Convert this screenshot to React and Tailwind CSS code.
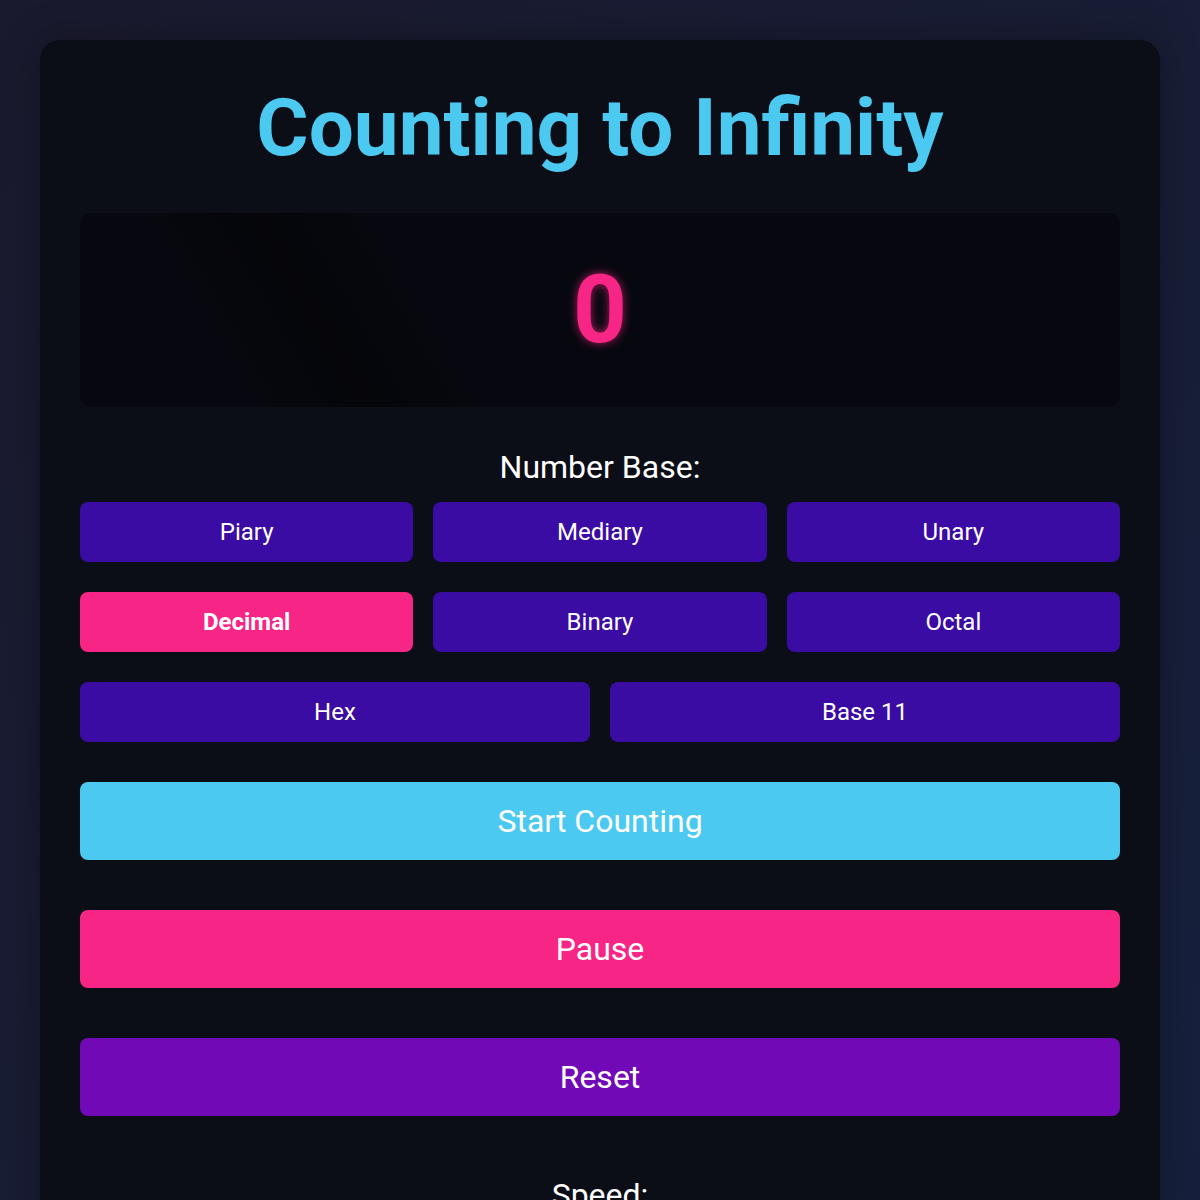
import { useState } from "react";

const bases = [
  ["Piary", "Mediary", "Unary"],
  ["Decimal", "Binary", "Octal"],
  ["Hex", "Base 11"],
];

const App = () => {
  const [base, setBase] = useState("Decimal");

  return (
    <div
      className="min-h-screen bg-gradient-to-br from-[#1a1a2e] to-[#16213e] px-10 pt-10"
      style={{ fontFamily: "Roboto, 'Liberation Sans', sans-serif" }}
    >
      <div className="bg-[#0b0d17] rounded-[20px] px-10 pt-10 pb-10 shadow-[0_0_40px_rgba(0,0,0,0.3)]">
        <h1 className="text-[80px] leading-[96px] font-bold text-[#4cc9f0] text-center mb-[37px]">
          Counting to Infinity
        </h1>

        {/* Display */}
        <div className="relative h-[194px] rounded-xl bg-[#07080f] overflow-hidden flex items-center justify-center">
          <div className="absolute inset-0 bg-[linear-gradient(60deg,transparent_15%,rgba(0,0,0,0.35)_25%,transparent_35%)]" />
          <span className="relative text-[94px] leading-none font-bold text-[#f72585] [text-shadow:0_0_10px_rgba(247,37,133,0.7)]">
            0
          </span>
        </div>

        <div className="text-[32px] text-white text-center mt-[38px] mb-[12px] leading-[45px]">
          Number Base:
        </div>

        <div className="flex flex-col gap-[30px]">
          {bases.map((row, i) => (
            <div
              key={i}
              className={row.length === 3 ? "grid grid-cols-3 gap-5" : "grid grid-cols-2 gap-5"}
            >
              {row.map((b) => (
                <button
                  key={b}
                  onClick={() => setBase(b)}
                  className={
                    b === base
                      ? "h-[60px] rounded-lg bg-[#f72585] text-white text-[24px] font-bold"
                      : "h-[60px] rounded-lg bg-[#3a0ca3] text-white text-[24px]"
                  }
                >
                  {b}
                </button>
              ))}
            </div>
          ))}
        </div>

        <div className="flex flex-col gap-[50px] mt-10">
          <button className="h-[78px] rounded-lg bg-[#4cc9f0] text-white text-[32px]">
            Start Counting
          </button>
          <button className="h-[78px] rounded-lg bg-[#f72585] text-white text-[32px]">
            Pause
          </button>
          <button className="h-[78px] rounded-lg bg-[#7209b7] text-white text-[32px]">
            Reset
          </button>
        </div>

        <div className="text-[32px] text-white text-center mt-[57px] leading-[45px]">
          Speed:
        </div>
        <div className="h-40" />
      </div>
    </div>
  );
};

export default App;
